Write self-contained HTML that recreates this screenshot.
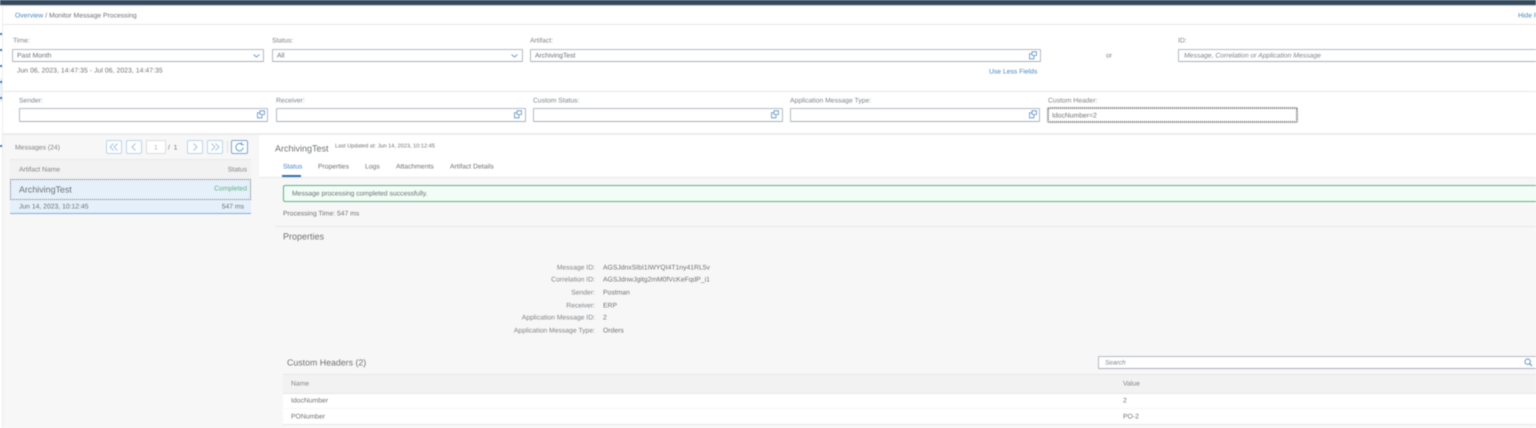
<!DOCTYPE html>
<html><head><meta charset="utf-8"><title>Monitor Message Processing</title>
<style>
html,body{margin:0;padding:0;width:1536px;height:428px;overflow:hidden;background:#fff}
#r{position:relative;width:1536px;height:428px;overflow:hidden;font-family:"Liberation Sans",sans-serif;font-size:6.800px;color:#6e7174;filter:blur(.4px);text-rendering:geometricPrecision}
#r div{position:absolute;white-space:nowrap}
.t{line-height:10px;transform:translateY(-3.700px)}
.l{color:#808386}
.a{color:#4a86c2}
.i{background:#fff;border:1px solid #b4bbc2;border-bottom-color:#a8b0b8;border-radius:1px;box-sizing:border-box}
.b{background:#fff;border:1px solid #bcd3ea;border-radius:2px;box-sizing:border-box}
.h{background:#e8e8e8;height:1px}
svg{position:absolute;overflow:visible}
</style></head><body><div id="r">
<div style="left:0;top:0;width:1536px;height:5px;background:#354a5f"></div>
<div style="left:0;top:5px;width:1536px;height:1px;background:#d0d5da"></div>
<div style="left:2px;top:5px;width:1px;height:423px;background:#ececec"></div>
<div style="left:0;top:78px;width:2px;height:24px;background:#e6f0fa"></div>
<div style="left:0;top:33px;width:2px;height:2px;background:#2f6fb3"></div>
<div style="left:0;top:49px;width:2px;height:2px;background:#2f6fb3"></div>
<div style="left:0;top:65px;width:2px;height:2px;background:#2f6fb3"></div>
<div style="left:0;top:81px;width:2px;height:2px;background:#2f6fb3"></div>
<div style="left:0;top:97px;width:2px;height:2px;background:#2f6fb3"></div>
<div style="left:0;top:145px;width:2px;height:2px;background:#2f6fb3"></div>

<div class="t" style="left:15px;top:15px"><span class="a">Overview</span> / Monitor Message Processing</div>
<div class="t a" style="left:1518px;top:15px">Hide Filter Bar</div>
<div class="h" style="left:3px;top:24px;width:1533px"></div>

<div class="t l" style="left:13px;top:40px">Time:</div>
<div class="i" style="left:12px;top:49px;width:252px;height:13px"></div>
<div class="t" style="left:17px;top:55px">Past Month</div>
<svg style="left:252px;top:53px" width="9" height="6"><path d="M1.500 1.500L4.500 4L7.500 1.500" fill="none" stroke="#6a9bd0" stroke-width=".9"/></svg>
<div class="t l" style="left:272px;top:40px">Status:</div>
<div class="i" style="left:272px;top:49px;width:251px;height:13px"></div>
<div class="t" style="left:277px;top:55px">All</div>
<svg style="left:510px;top:53px" width="9" height="6"><path d="M1.500 1.500L4.500 4L7.500 1.500" fill="none" stroke="#6a9bd0" stroke-width=".9"/></svg>
<div class="t l" style="left:530px;top:40px">Artifact:</div>
<div class="i" style="left:530px;top:49px;width:511px;height:13px"></div>
<div class="t" style="left:535px;top:55px">ArchivingTest</div>
<svg style="left:1028px;top:51px" width="10" height="9"><use href="#vh"/></svg>
<div class="t l" style="left:1106px;top:55px">or</div>
<div class="t l" style="left:1178px;top:40px">ID:</div>
<div class="i" style="left:1178px;top:49px;width:370px;height:13px"></div>
<div class="t l" style="left:1184px;top:55px;font-style:italic">Message, Correlation or Application Message</div>
<div class="t" style="left:17px;top:70px;letter-spacing:.06px">Jun 06, 2023, 14:47:35 - Jul 06, 2023, 14:47:35</div>
<div class="t a" style="left:989px;top:71px">Use Less Fields</div>
<div class="h" style="left:3px;top:91px;width:1533px"></div>

<svg width="0" height="0" style="left:0;top:0"><defs><g id="vh" fill="none" stroke="#5a90c8" stroke-width=".8"><path d="M4 4.500V.8H8.500V4.500H4"/><path d="M3.500 2.800H1.500V7.800H6V5"/></g></defs></svg>

<div class="t l" style="left:19px;top:100px">Sender:</div>
<div class="i" style="left:19px;top:108px;width:249px;height:14px"></div>
<svg style="left:256px;top:110px" width="10" height="9"><use href="#vh"/></svg>
<div class="t l" style="left:276px;top:100px">Receiver:</div>
<div class="i" style="left:276px;top:108px;width:250px;height:14px"></div>
<svg style="left:513px;top:110px" width="10" height="9"><use href="#vh"/></svg>
<div class="t l" style="left:533px;top:100px">Custom Status:</div>
<div class="i" style="left:533px;top:108px;width:250px;height:14px"></div>
<svg style="left:770px;top:110px" width="10" height="9"><use href="#vh"/></svg>
<div class="t l" style="left:790px;top:100px">Application Message Type:</div>
<div class="i" style="left:790px;top:108px;width:250px;height:14px"></div>
<svg style="left:1028px;top:110px" width="10" height="9"><use href="#vh"/></svg>
<div class="t l" style="left:1048px;top:100px">Custom Header:</div>
<div class="i" style="left:1048px;top:108px;width:249px;height:14px;border:1px dotted #606060;box-shadow:0 0 0 1px #b8b8b8"></div>
<div class="t" style="left:1052px;top:115px">IdocNumber=2</div>

<div style="left:3px;top:134px;width:256px;height:294px;background:#f7f7f7"></div>
<div style="left:259px;top:177px;width:1277px;height:251px;background:#f7f7f7"></div>
<div style="left:3px;top:133px;width:1533px;height:2px;background:#ececec"></div>

<div class="t l" style="left:15px;top:147px">Messages (24)</div>
<div class="b" style="left:106px;top:140px;width:16px;height:14px"></div>
<svg style="left:106px;top:140px" width="16" height="14"><path d="M7.500 3.500L4 7L7.500 10.500M11.500 3.500L8 7L11.500 10.500" fill="none" stroke="#a5c4e3" stroke-width="1"/></svg>
<div class="b" style="left:126px;top:140px;width:16px;height:14px"></div>
<svg style="left:126px;top:140px" width="16" height="14"><path d="M9.500 3.500L6 7L9.500 10.500" fill="none" stroke="#a5c4e3" stroke-width="1"/></svg>
<div class="i" style="left:146px;top:140px;width:20px;height:14px;border-color:#dcdcdc"></div>
<div class="t" style="left:154px;top:147px;color:#b5b5b5">1</div>
<div class="t" style="left:168px;top:147px">/&nbsp; 1</div>
<div class="b" style="left:187px;top:140px;width:16px;height:14px"></div>
<svg style="left:187px;top:140px" width="16" height="14"><path d="M6.500 3.500L10 7L6.500 10.500" fill="none" stroke="#a5c4e3" stroke-width="1"/></svg>
<div class="b" style="left:207px;top:140px;width:16px;height:14px"></div>
<svg style="left:207px;top:140px" width="16" height="14"><path d="M4.500 3.500L8 7L4.500 10.500M8.500 3.500L12 7L8.500 10.500" fill="none" stroke="#a5c4e3" stroke-width="1"/></svg>
<div style="left:227px;top:141px;width:1px;height:12px;background:#e2e2e2"></div>
<div class="b" style="left:231px;top:140px;width:17px;height:14px;border-color:#7aa6d4"></div>
<svg style="left:231px;top:140px" width="17" height="14"><path d="M10.800 4.300A3.700 3.700 0 1 0 12.200 7.500M10.500 2.200V4.700H13" fill="none" stroke="#5a90c8" stroke-width=".9"/></svg>

<div style="left:10px;top:159px;width:241px;height:20px;background:#f2f2f2;border-top:1px solid #e8e8e8;box-sizing:border-box"></div>
<div class="t l" style="left:19px;top:169px">Artifact Name</div>
<div class="t l" style="right:1289px;top:169px">Status</div>
<div style="left:10px;top:179px;width:241px;height:21px;background:#e5f0fa;border:1px dotted #777;box-sizing:border-box"></div>
<div class="t" style="left:19px;top:187.500px;font-size:8.900px">ArchivingTest</div>
<div class="t" style="right:1289px;top:188px;color:#5fb283">Completed</div>
<div style="left:10px;top:200px;width:241px;height:13px;background:#e5f0fa;border-bottom:1px solid #7fb0e0;box-sizing:content-box"></div>
<div class="t" style="left:19px;top:206px">Jun 14, 2023, 10:12:45</div>
<div class="t" style="right:1292px;top:206px">547 ms</div>

<div class="t" style="left:275px;top:146.500px;font-size:9px">ArchivingTest</div>
<div class="t" style="left:335px;top:145px;font-size:5.600px">Last Updated at: Jun 14, 2023, 10:12:45</div>
<div class="t" style="left:283px;top:166px;color:#4a86c2">Status</div>
<div class="t" style="left:318px;top:166px">Properties</div>
<div class="t" style="left:365px;top:166px">Logs</div>
<div class="t" style="left:396px;top:166px">Attachments</div>
<div class="t" style="left:450px;top:166px">Artifact Details</div>
<div style="left:282px;top:175px;width:19px;height:2px;background:#2f6fb3"></div>
<div style="left:259px;top:177px;width:1277px;height:1px;background:#e8e8e8"></div>

<div style="left:283px;top:185px;width:1260px;height:17px;background:#f1fdf6;border:1px solid #5fb283;border-radius:2px;box-sizing:border-box"></div>
<div class="t" style="left:292px;top:193px">Message processing completed successfully.</div>
<div class="t" style="left:283px;top:213px">Processing Time: 547 ms</div>
<div class="h" style="left:275px;top:226px;width:1261px"></div>
<div class="t" style="left:283px;top:234.500px;font-size:9px">Properties</div>

<div class="t l" style="right:941px;top:267px">Message ID:</div><div class="t" style="left:603px;top:267px">AGSJdnxSIbI1IWYQI4T1ny41RL5v</div>
<div class="t l" style="right:941px;top:279px">Correlation ID:</div><div class="t" style="left:603px;top:279px">AGSJdnwJgitg2mM0fVcKeFqdP_i1</div>
<div class="t l" style="right:941px;top:292px">Sender:</div><div class="t" style="left:603px;top:292px">Postman</div>
<div class="t l" style="right:941px;top:305px">Receiver:</div><div class="t" style="left:603px;top:305px">ERP</div>
<div class="t l" style="right:941px;top:317px">Application Message ID:</div><div class="t" style="left:603px;top:317px">2</div>
<div class="t l" style="right:941px;top:330px">Application Message Type:</div><div class="t" style="left:603px;top:330px">Orders</div>

<div class="t" style="left:287px;top:361px;font-size:8.800px">Custom Headers (2)</div>
<div class="i" style="left:1098px;top:356px;width:440px;height:13px"></div>
<div class="t l" style="left:1105px;top:362px;font-style:italic;font-size:6.500px">Search</div>
<svg style="left:1524px;top:358px" width="9" height="9"><circle cx="3.700" cy="3.700" r="2.700" fill="none" stroke="#5a90c8" stroke-width=".9"/><path d="M5.800 5.800L8 8" stroke="#5a90c8" stroke-width="1.100"/></svg>

<div style="left:283px;top:374px;width:1253px;height:20px;background:#f2f2f2;border-top:1px solid #e6e6e6;border-bottom:1px solid #e6e6e6;box-sizing:border-box"></div>
<div class="t l" style="left:291px;top:383px">Name</div>
<div class="t l" style="left:1123px;top:383px">Value</div>
<div style="left:283px;top:394px;width:1253px;height:14px;background:#fff"></div>
<div style="left:283px;top:409px;width:1253px;height:15px;background:#fff;border-bottom:1px solid #e8e8e8;box-sizing:content-box"></div>
<div class="t" style="left:291px;top:400px">IdocNumber</div>
<div class="t" style="left:1123px;top:400px">2</div>
<div class="t" style="left:291px;top:416px">PONumber</div>
<div class="t" style="left:1123px;top:416px">PO-2</div>
</div></body></html>
